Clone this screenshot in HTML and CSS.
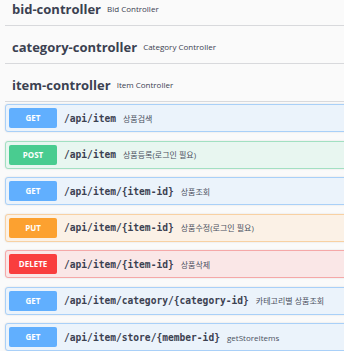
FILE: index.html
```html
<!DOCTYPE html>
<html lang="ko">
<head>
    <meta charset="UTF-8">
    <meta name="viewport" content="width=device-width, initial-scale=1.0">
    <title>Swagger UI</title>
    <link rel="stylesheet" href="styles.css">
</head>
<body>
    <div class="wrapper">
        <div class="tag">
            <span class="tag-name">bid-controller</span>
            <span class="tag-desc">Bid Controller</span>
        </div>
        <div class="tag">
            <span class="tag-name">category-controller</span>
            <span class="tag-desc">Category Controller</span>
        </div>
        <div class="tag">
            <span class="tag-name">item-controller</span>
            <span class="tag-desc">Item Controller</span>
        </div>

        <div class="operations">
            <div class="opblock get">
                <span class="method">GET</span>
                <span class="path">/api/item</span>
                <span class="summary">상품검색</span>
            </div>
            <div class="opblock post">
                <span class="method">POST</span>
                <span class="path">/api/item</span>
                <span class="summary">상품등록(로그인 필요)</span>
            </div>
            <div class="opblock get">
                <span class="method">GET</span>
                <span class="path">/api/item/{item-id}</span>
                <span class="summary">상품조회</span>
            </div>
            <div class="opblock put">
                <span class="method">PUT</span>
                <span class="path">/api/item/{item-id}</span>
                <span class="summary">상품수정(로그인 필요)</span>
            </div>
            <div class="opblock delete">
                <span class="method">DELETE</span>
                <span class="path">/api/item/{item-id}</span>
                <span class="summary">상품삭제</span>
            </div>
            <div class="opblock get">
                <span class="method">GET</span>
                <span class="path">/api/item/category/{category-id}</span>
                <span class="summary">카테고리별 상품조회</span>
            </div>
            <div class="opblock get">
                <span class="method">GET</span>
                <span class="path">/api/item/store/{member-id}</span>
                <span class="summary">getStoreItems</span>
            </div>
        </div>
    </div>
</body>
</html>
```

FILE: styles.css
```css
* {
    margin: 0;
    padding: 0;
    box-sizing: border-box;
}

body {
    font-family: "Open Sans", "Noto Sans CJK KR", sans-serif;
    background: #fafafa;
    color: #3b4151;
    overflow: hidden;
}

.wrapper {
    width: 380px;
    margin-top: -12px;
    padding-left: 5px;
}

.tag {
    display: flex;
    align-items: center;
    height: 38px;
    padding: 4px 7px 0;
    border-bottom: 1px solid #d8d9dc;
}

.tag-name {
    font-size: 13px;
    font-weight: 700;
    line-height: 14px;
}

.tag-desc {
    margin-left: 6px;
    font-size: 8px;
}

.operations {
    margin-top: 2px;
}

.opblock {
    display: flex;
    align-items: center;
    height: 28px;
    margin-bottom: 8.5px;
    padding: 0 3px;
    border: 1px solid;
    border-radius: 3px;
    box-shadow: 0 0 2px rgba(0, 0, 0, 0.12);
}

.method {
    width: 48px;
    height: 20px;
    line-height: 20px;
    text-align: center;
    border-radius: 2px;
    color: white;
    font-size: 8px;
    font-weight: 700;
}

.path {
    margin-left: 7px;
    font-family: "DejaVu Sans Mono", monospace;
    font-size: 9.6px;
    font-weight: 700;
}

.summary {
    margin-left: 7px;
    font-family: "Open Sans", "Noto Sans CJK KR", sans-serif;
    font-size: 8px;
    color: #4a5060;
}

.get {
    background: #ebf3fb;
    border-color: #a9d0f8;
}

.get .method {
    background: #61affe;
}

.post {
    background: #e8f6f0;
    border-color: #a2e0c2;
}

.post .method {
    background: #49cc90;
}

.put {
    background: #fbf1e6;
    border-color: #f8d1a3;
}

.put .method {
    background: #fca130;
}

.delete {
    background: #fae7e7;
    border-color: #f5a8a8;
}

.delete .method {
    background: #f93e3e;
}
```
